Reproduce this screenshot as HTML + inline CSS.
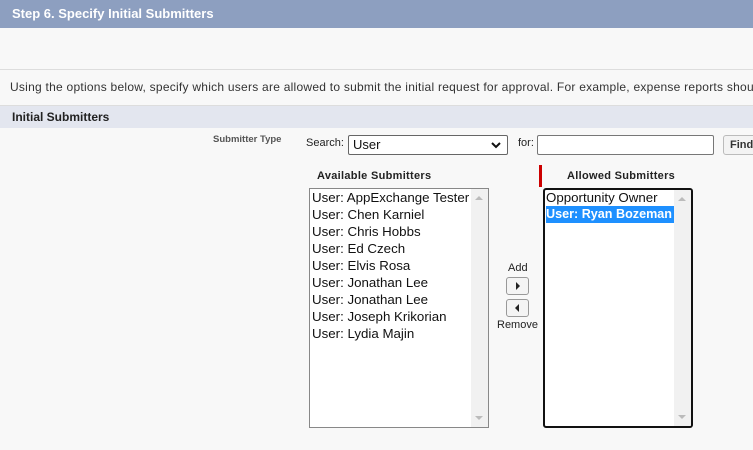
<!DOCTYPE html>
<html><head><style>
body{margin:0;width:753px;height:450px;background:#f8f8f8;font-family:"Liberation Sans",Arial,sans-serif;position:relative;overflow:hidden;color:#333}
.a{position:absolute;white-space:nowrap}
.hdr{left:0;top:0;width:753px;height:28px;background:#8d9fc0;color:#fff;font-weight:bold;font-size:13px;line-height:28px;padding-left:12px;box-sizing:border-box}
.list{background:#fff;border:1px solid #888;box-sizing:border-box;font-size:13.3px;line-height:17px;color:#111;overflow:hidden}
.sb{position:absolute;right:0;top:0;bottom:0;width:17px;background:#f1f1f1}
.sb:before{content:"";position:absolute;left:4px;top:7px;border:4px solid transparent;border-bottom-color:#bbb;border-top:0}
.sb:after{content:"";position:absolute;left:4px;bottom:7px;border:4px solid transparent;border-top-color:#bbb;border-bottom:0}
.btn{width:23px;height:18px;background:#f4f4f4;border:1px solid #999;border-radius:3px;box-sizing:border-box}
</style></head><body>
<div class="a hdr">Step 6. Specify Initial Submitters</div>
<div class="a" style="left:0;top:69px;width:753px;height:1px;background:#ddd"></div>
<div class="a" style="left:10px;top:80px;font-size:12px;letter-spacing:0.25px;color:#333">Using the options below, specify which users are allowed to submit the initial request for approval. For example, expense reports should</div>
<div class="a" style="left:0;top:105px;width:753px;height:1px;background:#ddd"></div>
<div class="a" style="left:0;top:106px;width:753px;height:22px;background:#e3e6ef"></div>
<div class="a" style="left:12px;top:110px;font-size:12px;font-weight:bold;color:#222">Initial Submitters</div>
<div class="a" style="left:213px;top:134px;font-size:9.5px;font-weight:bold;color:#555">Submitter Type</div>
<div class="a" style="left:306px;top:137px;font-size:11px;color:#222">Search:</div>
<div class="a" style="left:348px;top:135px;width:160px;height:20px;background:#fff;border:1px solid #666;border-radius:2px;box-sizing:border-box;font-size:13px;line-height:18px;padding-left:4px;color:#111">User
<svg style="position:absolute;right:6px;top:6px" width="10" height="7" viewBox="0 0 10 7"><path d="M1 1L5 5L9 1" stroke="#111" stroke-width="2" fill="none"/></svg></div>
<div class="a" style="left:518px;top:137px;font-size:11px;color:#222">for:</div>
<div class="a" style="left:537px;top:135px;width:177px;height:20px;background:#fff;border:1px solid #777;border-radius:2px;box-sizing:border-box"></div>
<div class="a" style="left:723px;top:135px;width:40px;height:20px;background:#f3f3f3;border:1px solid #bbb;border-radius:3px;box-sizing:border-box;font-size:11px;font-weight:bold;line-height:18px;padding-left:6px;color:#333">Find</div>
<div class="a" style="left:317px;top:170px;font-size:11px;font-weight:bold;color:#222;letter-spacing:0.3px">Available Submitters</div>
<div class="a list" style="left:309px;top:188px;width:180px;height:240px;padding:0 2px">
User: AppExchange Tester<br>User: Chen Karniel<br>User: Chris Hobbs<br>User: Ed Czech<br>User: Elvis Rosa<br>User: Jonathan Lee<br>User: Jonathan Lee<br>User: Joseph Krikorian<br>User: Lydia Majin<div class="sb"></div></div>
<div class="a" style="left:539px;top:165px;width:3px;height:22px;background:#c00"></div>
<div class="a" style="left:567px;top:170px;font-size:11px;font-weight:bold;color:#222;letter-spacing:0.3px">Allowed Submitters</div>
<div class="a list" style="left:543px;top:188px;width:150px;height:240px;border:2px solid #111;border-radius:3px;padding:0 1px">
<div style="margin-top:-1px">Opportunity Owner</div><div style="background:#1e90ff;color:#fff;width:131px;font-weight:bold;font-size:12.6px">User: Ryan Bozeman</div><div class="sb"></div></div>
<div class="a" style="left:508px;top:262px;font-size:11px;color:#222">Add</div>
<div class="a btn" style="left:506px;top:277px"><svg width="21" height="16"><path d="M9 4L13 8L9 12Z" fill="#222"/></svg></div>
<div class="a btn" style="left:506px;top:299px"><svg width="21" height="16"><path d="M12 4L8 8L12 12Z" fill="#222"/></svg></div>
<div class="a" style="left:497px;top:319px;font-size:11px;color:#222">Remove</div>
</body></html>
